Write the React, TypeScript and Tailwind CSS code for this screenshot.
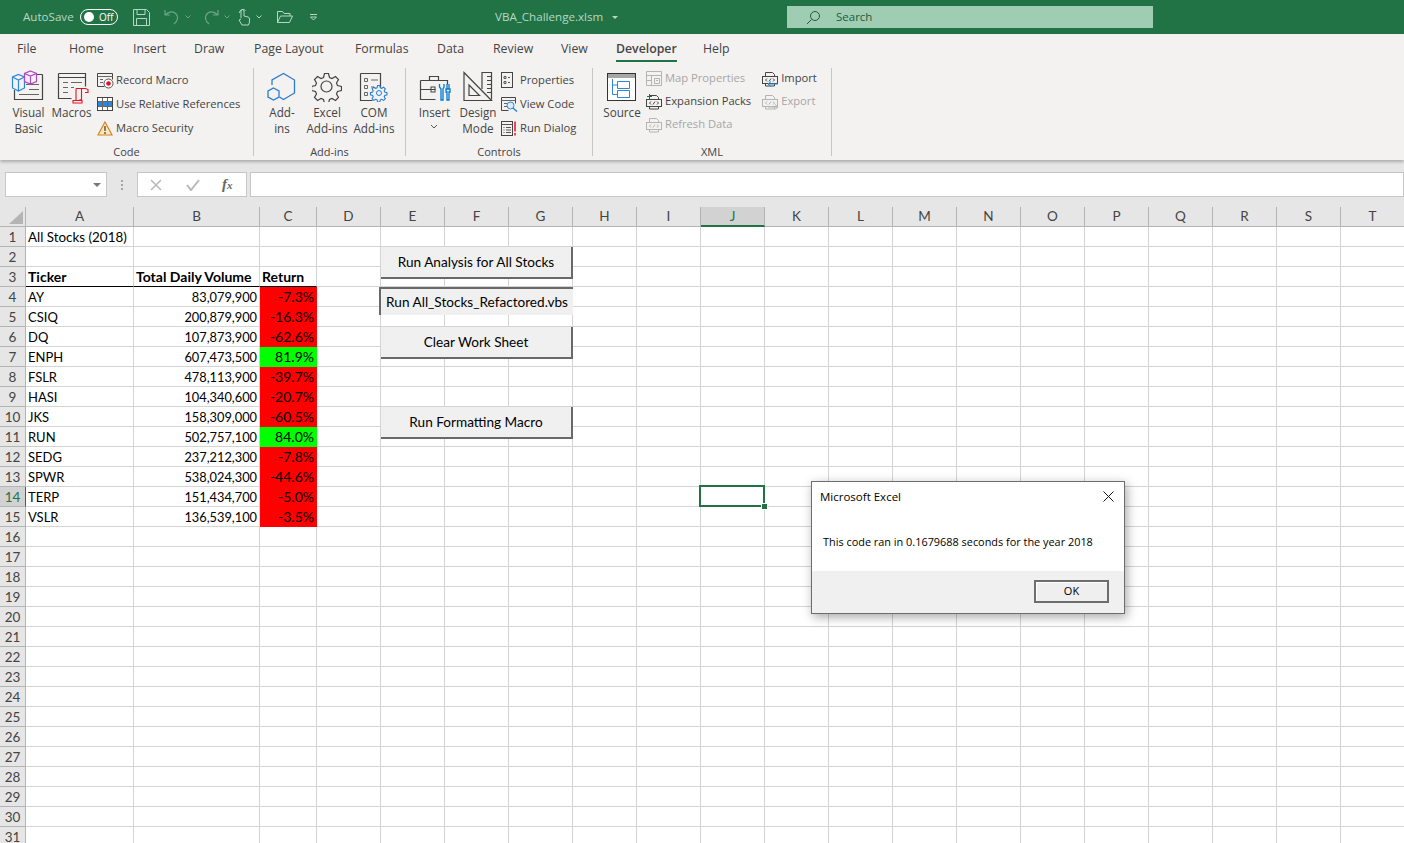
import { ReactNode } from "react";

const SEGOE = "font-['Open_Sans',sans-serif]";
const CALIBRI = "font-['Lato',sans-serif]";

const tabs = [
  { name: "File", w: "w-[52px]" },
  { name: "Home", w: "w-[64px]" },
  { name: "Insert", w: "w-[61px]" },
  { name: "Draw", w: "w-[60px]" },
  { name: "Page Layout", w: "w-[101px]" },
  { name: "Formulas", w: "w-[82px]" },
  { name: "Data", w: "w-[56px]" },
  { name: "Review", w: "w-[68px]" },
  { name: "View", w: "w-[55px]" },
  { name: "Developer", w: "w-[87px]" },
  { name: "Help", w: "w-[50px]" },
];

const colHeaders = "ABCDEFGHIJKLMNOPQRST".split("");

const stocks = [
  ["AY", "83,079,900", "-7.3%", 0],
  ["CSIQ", "200,879,900", "-16.3%", 0],
  ["DQ", "107,873,900", "-62.6%", 0],
  ["ENPH", "607,473,500", "81.9%", 1],
  ["FSLR", "478,113,900", "-39.7%", 0],
  ["HASI", "104,340,600", "-20.7%", 0],
  ["JKS", "158,309,000", "-60.5%", 0],
  ["RUN", "502,757,100", "84.0%", 1],
  ["SEDG", "237,212,300", "-7.8%", 0],
  ["SPWR", "538,024,300", "-44.6%", 0],
  ["TERP", "151,434,700", "-5.0%", 0],
  ["VSLR", "136,539,100", "-3.5%", 0],
] as const;

function Svg({ w, h, children, className }: { w: number; h: number; children: ReactNode; className?: string }) {
  return (
    <svg width={w} height={h} viewBox={`0 0 ${w} ${h}`} fill="none" className={className}>
      {children}
    </svg>
  );
}

/* ---------- ribbon icons ---------- */

const VisualBasicIcon = (
  <Svg w={36} h={34}>
    <path d="M25 4.500h6.500M3.500 20v9.500h28V4.500" stroke="#444" strokeWidth="1.200" />
    <path d="M15 14.500h13M18 19.500h10M8 24.500h20" stroke="#666" />
    <path d="M7.500 4.500l6 2.500v11l-6 3-6-3V7zM1.500 7l6 3 6-3M7.500 10v11" stroke="#2b88d8" strokeWidth="1.200" />
    <path d="M19.500 1l6 2.500v8l-6 2.500-6-2.500v-8zM13.500 3.500l6 2.500 6-2.500M19.500 6v8" stroke="#b146c2" strokeWidth="1.200" />
  </Svg>
);

const MacrosIcon = (
  <Svg w={36} h={34} className="ml-[6px]">
    <path d="M1.500 3.500h27v13M1.500 3.500v25h13" stroke="#444" strokeWidth="1.200" />
    <path d="M1.500 7.500h27" stroke="#444" />
    <path d="M6 12.500h5M14 12.500h11M6 17.500h5M14 17.500h3M6 22.500h5" stroke="#666" />
    <path d="M19 18.500h9.500l2.500 1v3h-3M19 18.500v12M16 30.500v2.500h9v-2.500h-9zM19.500 30.500h2l3-1V18.500" stroke="#e81123" strokeWidth="1.100" />
  </Svg>
);

const RecordMacroIcon = (
  <Svg w={17} h={17}>
    <path d="M.5 1.500h15v6M.5 1.500v13h7" stroke="#444" />
    <path d="M.5 4.500h15M3 7.500h3M3 10.500h3" stroke="#666" />
    <circle cx="11.500" cy="11.500" r="4.500" stroke="#555" fill="#fff" />
    <circle cx="11.500" cy="11.500" r="2.300" fill="#e81123" />
  </Svg>
);

const RelativeRefIcon = (
  <Svg w={17} h={14}>
    <rect x=".5" y=".5" width="15" height="13" fill="#fff" stroke="#444" />
    <rect x="1" y="5" width="14" height="4" fill="#2b88d8" />
    <path d="M5.500 1v12M10.500 1v12M1 4.500h14M1 9.500h14" stroke="#666" />
  </Svg>
);

const WarnIcon = (
  <Svg w={16} h={15}>
    <path d="M8 1L15 14H1z" fill="#fde9b8" stroke="#d9822b" strokeWidth="1.200" />
    <path d="M8 5v5M8 11v2" stroke="#444" strokeWidth="1.300" />
  </Svg>
);

const AddInsIcon = (
  <Svg w={30} h={30}>
    <path d="M5 13V8L16.500 1.500 27.500 8V21L16.500 27.500 12.500 25" stroke="#2b7cd3" strokeWidth="1.300" />
    <path d="M6.500 16L12 19v6l-5.500 3L1 25v-6z" stroke="#2b7cd3" strokeWidth="1.300" />
  </Svg>
);

const GearPath =
  "M12 1h4l1 4 2.500 1 3.500-2 3 3-2 3.500 1 2.500 4 1v4l-4 1-1 2.500 2 3.500-3 3-3.500-2-2.500 1-1 4h-4l-1-4-2.500-1-3.500 2-3-3 2-3.500-1-2.500-4-1v-4l4-1 1-2.500-2-3.500 3-3 3.500 2L11 5z";

const GearIcon = (
  <Svg w={30} h={30}>
    <path d={GearPath} stroke="#444" strokeWidth="1.200" transform="translate(.5 .5)" />
    <circle cx="14.500" cy="14.500" r="5.500" stroke="#444" strokeWidth="1.200" />
  </Svg>
);

const ComIcon = (
  <Svg w={30} h={30}>
    <path d="M1.500 1.500h20v14M1.500 1.500v27h12" stroke="#444" strokeWidth="1.200" />
    <path d="M5.500 6.500h3v3h-3zM5.500 13.500h3v3h-3zM5.500 20.500h3v3h-3z" stroke="#666" />
    <path d="M12 8h7M12 15h3" stroke="#666" />
    <path d={GearPath} stroke="#2b7cd3" strokeWidth="2" transform="translate(12 13) scale(.55)" />
    <circle cx="20" cy="21" r="2.500" stroke="#2b7cd3" />
  </Svg>
);

const InsertIcon = (
  <Svg w={32} h={28}>
    <path d="M1.500 7.500h27v4M1.500 7.500v19h15M1.500 16.500h15M10.500 7.500v-4h9v4" stroke="#444" strokeWidth="1.200" />
    <rect x="12" y="14" width="4" height="5" stroke="#444" />
    <path d="M20.500 11v3l1.500 2v11h2V16l1-2v-3M28 11v5M30 11v5M27 16h4v3h-1v8h-2v-8h-1z" stroke="#0078d4" strokeWidth="1.300" />
  </Svg>
);

const DesignIcon = (
  <Svg w={30} h={32}>
    <path d="M1 1.500L28.500 29.500H1zM6 14l10.500 10.500H6z" stroke="#444" strokeWidth="1.200" />
    <path d="M19 18V1.500h9.500v27" stroke="#444" strokeWidth="1.200" />
    <path d="M24 5.500h4M24 9.500h4M24 13.500h4M24 17.500h4M24 21.500h4" stroke="#444" />
  </Svg>
);

const PropertiesIcon = (
  <Svg w={13} h={16}>
    <rect x=".5" y=".5" width="11" height="15" stroke="#444" />
    <path d="M3 4.500h2v2H3zM3 9.500h2v2H3zM7 5.500h2M7 10.500h2" stroke="#555" />
  </Svg>
);

const ViewCodeIcon = (
  <Svg w={17} h={16}>
    <path d="M.5 1.500h14v6M.5 1.500v13h7" stroke="#444" />
    <path d="M.5 4.500h14M3 7.500h3M3 10.500h3" stroke="#666" />
    <circle cx="9.500" cy="9.500" r="3.500" stroke="#2b88d8" fill="#d8ecfb" />
    <path d="M12 12l4 3.500" stroke="#2b88d8" strokeWidth="1.500" />
  </Svg>
);

const RunDialogIcon = (
  <Svg w={16} h={15}>
    <rect x=".5" y=".5" width="11" height="14" stroke="#444" />
    <path d="M.5 3.500h11M2.500 6.500h1M5 6.500h5M2.500 9h1M5 9h5M2.500 11.500h1M5 11.500h5" stroke="#555" />
    <path d="M14 .5v10M14 12v2.500" stroke="#e81123" strokeWidth="1.500" />
  </Svg>
);

const SourceIcon = (
  <Svg w={30} h={30}>
    <rect x=".5" y="1.500" width="28" height="27" fill="#fff" stroke="#333" />
    <rect x="1" y="2" width="27" height="4" fill="#a6a6a6" />
    <path d="M10.500 9.500h12v7h-12zM10.500 18.500h12v7h-12zM5.500 7v15.500h5M5.500 13h5" stroke="#2b88d8" />
  </Svg>
);

function XmlIcon({ disabled, plus, arrow }: { disabled?: boolean; plus?: boolean; arrow?: "in" | "out" }) {
  const c = disabled ? "#b4b4b4" : "#444";
  return (
    <Svg w={17} h={16}>
      <path d="M3.500 5V1.500h7l2 2V5" stroke={c} />
      <rect x=".5" y="5.500" width="15" height="7" stroke={c} />
      <path d="M5 7.500L3.500 9 5 10.500M11 7.500L12.500 9 11 10.500M9 7.500L7 10.500" stroke={c} />
      <path d="M3.500 13v2h9v-2" stroke={c} />
      {plus && <path d="M3.500 0v5M1 2.500h5" stroke="#107c41" />}
      {arrow === "in" && <path d="M16 13H6M9 10.500L6 13l3 2.500" stroke="#2b88d8" />}
      {arrow === "out" && <path d="M6 13h10M13 10.500l3 2.500-3 2.500" stroke="#b4b4b4" />}
    </Svg>
  );
}

const MapPropsIcon = (
  <Svg w={17} h={17}>
    <path d="M.5 1.500h15v14H.5zM.5 5.500h15M5.500 5.500v10M.5 10.500h5" stroke="#b4b4b4" />
    <path d="M8.500 8.500h5v5h-5zM10 10.500h2" stroke="#b4b4b4" />
  </Svg>
);

function LargeBtn({ w, icon, lines, top = "mt-[6px]", chevron }: { w: string; icon: ReactNode; lines: string[]; top?: string; chevron?: boolean }) {
  return (
    <div className={`${w} flex shrink-0 flex-col items-center`}>
      <div className={`${top} flex h-[34px] items-center justify-center`}>{icon}</div>
      <div className="text-center text-[11.700px] leading-[16px] text-[#444]">
        {lines.map(l => (
          <div key={l} className="whitespace-nowrap">{l}</div>
        ))}
        {chevron && (
          <svg width="8" height="5" viewBox="0 0 8 5" fill="none" className="mx-auto mt-[4px]">
            <path d="M1 1l3 3 3-3" stroke="#555" />
          </svg>
        )}
      </div>
    </div>
  );
}

function SmallBtn({ icon, label, disabled, h = "h-[24px]" }: { icon: ReactNode; label: string; disabled?: boolean; h?: string }) {
  return (
    <div className={`flex ${h} items-center whitespace-nowrap text-[11.200px] ${disabled ? "text-[#a6a6a6]" : "text-[#444]"}`}>
      <span className="flex w-[19px] shrink-0 items-center">{icon}</span>
      {label}
    </div>
  );
}

function Group({ w, label, children, pl }: { w: string; label: string; children: ReactNode; pl: string }) {
  return (
    <div className={`${w} flex shrink-0 flex-col`}>
      <div className={`flex h-[81px] ${pl}`}>{children}</div>
      <div className="text-center text-[11px] leading-[14px] text-[#444]">{label}</div>
    </div>
  );
}

const Divider = () => <div className="mt-[4px] h-[88px] w-px shrink-0 bg-[#c6c6c6]" />;

function TitleBar() {
  const c = "#b7d6c4";
  return (
    <div className={`flex h-[34px] items-center bg-[#217346] text-[11.600px] text-[#b7d6c4] ${SEGOE}`}>
      <span className="ml-[23px] w-[57px]">AutoSave</span>
      <div className="flex h-[16px] w-[38px] items-center rounded-full border border-white pl-[3px] text-white">
        <span className="h-[10px] w-[10px] rounded-full bg-white" />
        <span className="ml-[5px] text-[10px] leading-none">Off</span>
      </div>
      <svg width="17" height="17" viewBox="0 0 17 17" fill="none" className="ml-[15px]">
        <path d="M.5.500h13l3 3v13H.5zM4 .5v5h8v-5M3.500 16.500v-7h10v7" stroke={c} />
      </svg>
      <svg width="16" height="16" viewBox="0 0 16 16" fill="none" className="ml-[14px] opacity-50">
        <path d="M1 1v5h5M1.500 6C4 3 8 2 11 4c4 3 3 8-1 11" stroke={c} strokeWidth="1.200" />
      </svg>
      <svg width="6" height="4" viewBox="0 0 6 4" fill="none" className="ml-[5px] opacity-50">
        <path d="M.5.500l2.500 2.500 2.500-2.500" stroke={c} />
      </svg>
      <svg width="16" height="16" viewBox="0 0 16 16" fill="none" className="ml-[12px] opacity-50">
        <path d="M15 1v5h-5M14.500 6C12 3 8 2 5 4c-4 3-3 8 1 11" stroke={c} strokeWidth="1.200" />
      </svg>
      <svg width="6" height="4" viewBox="0 0 6 4" fill="none" className="ml-[5px] opacity-50">
        <path d="M.5.500l2.500 2.500 2.500-2.500" stroke={c} />
      </svg>
      <svg width="12" height="18" viewBox="0 0 12 18" fill="none" className="ml-[8px]">
        <path d="M3 10V3a1.500 1.500 0 0 1 3 0v5l4 1c1 .3 1.500 1 1.500 2v3l-1 3H4l-3-5 2-1M1.500 5a3.500 3.500 0 0 1 6 -2.500" stroke={c} />
      </svg>
      <svg width="6" height="4" viewBox="0 0 6 4" fill="none" className="ml-[6px]">
        <path d="M.5.500l2.500 2.500 2.500-2.500" stroke={c} />
      </svg>
      <svg width="16" height="12" viewBox="0 0 16 12" fill="none" className="ml-[15px]">
        <path d="M.5 11.500V.5h5l1.500 2h6v2.500M.5 11.500h12l3-6.500H3.500z" stroke={c} />
      </svg>
      <svg width="7" height="6" viewBox="0 0 7 6" fill="none" className="ml-[17px]">
        <path d="M0 .5h7M.5 3l3 3 3-3z" stroke={c} />
      </svg>
      <span className="mb-[1px] ml-[178px] w-[117px] whitespace-nowrap">VBA_Challenge.xlsm</span>
      <svg width="6" height="3" viewBox="0 0 6 3">
        <path d="M0 0h6L3 3z" fill={c} />
      </svg>
      <div className="ml-[169px] flex h-[22px] w-[366px] items-center bg-[#9fcdb3] text-[#1e5c3c]">
        <svg width="15" height="15" viewBox="0 0 15 15" fill="none" className="ml-[19px]">
          <circle cx="9" cy="6" r="4.500" stroke="#1e5c3c" />
          <path d="M5.500 9.500L1 14" stroke="#1e5c3c" />
        </svg>
        <span className="ml-[15px] text-[11.500px]">Search</span>
      </div>
    </div>
  );
}

function Ribbon() {
  return (
    <div className={`relative z-10 h-[126px] bg-[#f3f2f1] shadow-[0_2px_3px_rgba(0,0,0,0.25)] ${SEGOE}`}>
      <div className="flex h-[30px] pl-[17px] pt-[6px] text-[12.300px] text-[#444]">
        {tabs.map(t => (
          <div key={t.name} className={t.w}>
            <span className={`relative inline-block whitespace-nowrap ${t.name === "Developer" ? "font-semibold" : ""}`}>
              {t.name}
              {t.name === "Developer" && <span className="absolute left-0 right-0 top-[20px] h-[2px] bg-[#217346]" />}
            </span>
          </div>
        ))}
      </div>
      <div className="flex">
        <Group w="w-[253px]" label="Code" pl="pl-[11px]">
          <LargeBtn w="w-[35px]" icon={VisualBasicIcon} lines={["Visual", "Basic"]} />
          <LargeBtn w="w-[51px]" icon={MacrosIcon} lines={["Macros"]} />
          <div className="pt-[4px]">
            <SmallBtn icon={RecordMacroIcon} label="Record Macro" />
            <SmallBtn icon={RelativeRefIcon} label="Use Relative References" />
            <SmallBtn icon={WarnIcon} label="Macro Security" />
          </div>
        </Group>
        <Divider />
        <Group w="w-[151px]" label="Add-ins" pl="pl-[8px]">
          <LargeBtn w="w-[40px]" icon={AddInsIcon} lines={["Add-", "ins"]} />
          <LargeBtn w="w-[50px]" icon={GearIcon} lines={["Excel", "Add-ins"]} />
          <LargeBtn w="w-[44px]" icon={ComIcon} lines={["COM", "Add-ins"]} />
        </Group>
        <Divider />
        <Group w="w-[186px]" label="Controls" pl="pl-[8px]">
          <LargeBtn w="w-[41px]" icon={InsertIcon} lines={["Insert"]} chevron />
          <LargeBtn w="w-[46px]" icon={DesignIcon} lines={["Design", "Mode"]} />
          <div className="pt-[4px]">
            <SmallBtn icon={PropertiesIcon} label="Properties" />
            <SmallBtn icon={ViewCodeIcon} label="View Code" />
            <SmallBtn icon={RunDialogIcon} label="Run Dialog" />
          </div>
        </Group>
        <Divider />
        <Group w="w-[238px]" label="XML" pl="pl-[9px]">
          <LargeBtn w="w-[40px]" icon={SourceIcon} lines={["Source"]} />
          <div className="ml-[4px] pt-[3px]">
            <SmallBtn h="h-[23px]" icon={MapPropsIcon} label="Map Properties" disabled />
            <SmallBtn h="h-[23px]" icon={<XmlIcon plus />} label="Expansion Packs" />
            <SmallBtn h="h-[23px]" icon={<XmlIcon disabled />} label="Refresh Data" disabled />
          </div>
          <div className="ml-[11px] pt-[3px]">
            <SmallBtn h="h-[23px]" icon={<XmlIcon arrow="in" />} label="Import" />
            <SmallBtn h="h-[23px]" icon={<XmlIcon disabled arrow="out" />} label="Export" disabled />
          </div>
        </Group>
        <Divider />
      </div>
    </div>
  );
}

function FormulaBar() {
  return (
    <div className="flex h-[47px] items-start bg-[#e6e6e6] pl-[5px] pt-[12px]">
      <div className="flex h-[25px] w-[102px] items-center justify-end border border-[#c6c6c6] bg-white pr-[5px]">
        <svg width="8" height="4" viewBox="0 0 8 4"><path d="M0 0h8L4 4z" fill="#777" /></svg>
      </div>
      <div className="ml-[14px] flex w-[3px] flex-col gap-[2px] pt-[8px]">
        <span className="h-[2px] w-[2px] bg-[#a6a6a6]" />
        <span className="h-[2px] w-[2px] bg-[#a6a6a6]" />
        <span className="h-[2px] w-[2px] bg-[#a6a6a6]" />
      </div>
      <div className="ml-[13px] flex h-[25px] w-[110px] items-center border border-[#c6c6c6] bg-white">
        <svg width="12" height="12" viewBox="0 0 12 12" fill="none" className="ml-[12px]">
          <path d="M1 1l10 10M11 1L1 11" stroke="#b8b8b8" strokeWidth="1.500" />
        </svg>
        <svg width="14" height="12" viewBox="0 0 14 12" fill="none" className="ml-[24px]">
          <path d="M1 6l4 5 8-10" stroke="#b8b8b8" strokeWidth="2" />
        </svg>
        <span className="ml-[22px] font-['Liberation_Serif',serif] text-[15px] font-bold italic leading-none text-[#666]">
          f<span className="text-[11px]">x</span>
        </span>
      </div>
      <div className="ml-[3px] h-[25px] flex-1 border border-[#c6c6c6] bg-white" />
    </div>
  );
}

function Cell({ children, className = "" }: { children?: ReactNode; className?: string }) {
  return (
    <div className={`relative h-[20px] whitespace-nowrap border-b border-r px-[2px] leading-[20px] text-black ${className}`}>
      {children}
    </div>
  );
}

function cellFor(row: number, col: number) {
  const grid = "border-[#d4d4d4]";
  if (row === 1 && col === 0) return <Cell className={`${grid} text-[13.400px]`}>All Stocks (2018)</Cell>;
  if (row === 3 && col <= 2) {
    const text = ["Ticker", "Total Daily Volume", "Return"][col];
    return <Cell className="border-r-[#d4d4d4] border-b-black text-[14px] font-bold">{text}</Cell>;
  }
  if (row >= 4 && row <= 15 && col <= 2) {
    const s = stocks[row - 4];
    if (col === 0) return <Cell className={`${grid} text-[13px]`}>{s[0]}</Cell>;
    if (col === 1) return <Cell className={`${grid} text-right text-[12.800px]`}>{s[1]}</Cell>;
    return (
      <Cell className={`text-right text-[14px] ${s[3] ? "border-[#00ff00] bg-[#00ff00]" : "border-[#ff0000] bg-[#ff0000]"}`}>
        {s[2]}
      </Cell>
    );
  }
  if (row === 14 && col === 9) {
    return (
      <Cell className={`${grid} z-10`}>
        <span className="absolute -left-[2px] -top-[2px] h-[22px] w-[66px] border-2 border-[#217346]" />
        <span className="absolute -bottom-[4px] -right-[4px] h-[7px] w-[7px] border border-white bg-[#217346]" />
      </Cell>
    );
  }
  return <Cell className={grid} />;
}

function MacroButton({ label, className, pressed }: { label: string; className: string; pressed?: boolean }) {
  return (
    <div
      className={`absolute z-20 flex items-center justify-center whitespace-nowrap bg-[#f0f0f0] text-[13.600px] text-black ${
        pressed ? "border-l-2 border-t-2 border-[#696969]" : "border-b-2 border-r-2 border-[#696969]"
      } ${className}`}
    >
      {label}
    </div>
  );
}

function Sheet() {
  const rows = Array.from({ length: 31 }, (_, i) => i + 1);
  return (
    <div className={`relative h-[636px] overflow-hidden ${CALIBRI}`}>
      <div className="grid grid-cols-[26px_108px_126px_57px_repeat(17,64px)]">
        <div className="relative h-[20px] border-b border-r border-[#b4b4b4] bg-[#e6e6e6]">
          <svg width="14" height="13" viewBox="0 0 14 13" className="absolute bottom-[2px] right-[2px]">
            <path d="M14 0v13H0z" fill="#b4b4b4" />
          </svg>
        </div>
        {colHeaders.map(c => (
          <div
            key={c}
            className={`h-[20px] border-r text-center text-[13.500px] leading-[19px] ${
              c === "J"
                ? "border-b-2 border-r-[#b4b4b4] border-b-[#217346] bg-[#d2d2d2] text-[#217346]"
                : "border-b border-[#b4b4b4] bg-[#e6e6e6] text-[#444]"
            }`}
          >
            {c}
          </div>
        ))}
        {rows.map(r => (
          <div key={r} className="contents">
            <div
              className={`h-[20px] border-b border-r text-center text-[13.500px] leading-[20px] ${
                r === 14
                  ? "border-b-[#b4b4b4] border-r-[#217346] bg-[#d2d2d2] text-[#217346]"
                  : "border-[#b4b4b4] bg-[#e6e6e6] text-[#444]"
              }`}
            >
              {r}
            </div>
            {colHeaders.map((_, i) => (
              <div key={i} className="contents">{cellFor(r, i)}</div>
            ))}
          </div>
        ))}
      </div>
      <MacroButton label="Run Analysis for All Stocks" className="left-[381px] top-[40px] h-[32px] w-[192px]" />
      <MacroButton label="Run All_Stocks_Refactored.vbs" className="left-[379px] top-[80px] h-[28px] w-[194px]" pressed />
      <MacroButton label="Clear Work Sheet" className="left-[381px] top-[120px] h-[32px] w-[192px]" />
      <MacroButton label="Run Formatting Macro" className="left-[381px] top-[200px] h-[32px] w-[192px]" />
    </div>
  );
}

function MessageBox() {
  return (
    <div className={`absolute left-[811px] top-[481px] z-30 h-[133px] w-[314px] border border-[#6d6d6d] bg-white shadow-[2px_3px_10px_rgba(0,0,0,0.35)] ${SEGOE}`}>
      <div className="flex h-[29px] items-center justify-between pl-[8px] pr-[10px] text-[11.500px] text-black">
        Microsoft Excel
        <svg width="11" height="11" viewBox="0 0 11 11" fill="none">
          <path d="M.5.500l10 10M10.500.5l-10 10" stroke="#111" />
        </svg>
      </div>
      <div className="h-[60px] whitespace-nowrap pl-[11px] pt-[23px] text-[10.900px] leading-[16px] text-black">
        This code ran in 0.1679688 seconds for the year 2018
      </div>
      <div className="flex h-[42px] items-start justify-end bg-[#f0f0f0] pr-[15px] pt-[9px]">
        <div className="flex h-[23px] w-[75px] items-center justify-center border-2 border-[#6d6d6d] bg-[#efefef] text-[11px] text-black shadow-[inset_1px_1px_0_#fff]">
          OK
        </div>
      </div>
    </div>
  );
}

export default function App() {
  return (
    <div className="relative h-[843px] w-[1404px] overflow-hidden bg-white">
      <TitleBar />
      <Ribbon />
      <FormulaBar />
      <Sheet />
      <MessageBox />
    </div>
  );
}
